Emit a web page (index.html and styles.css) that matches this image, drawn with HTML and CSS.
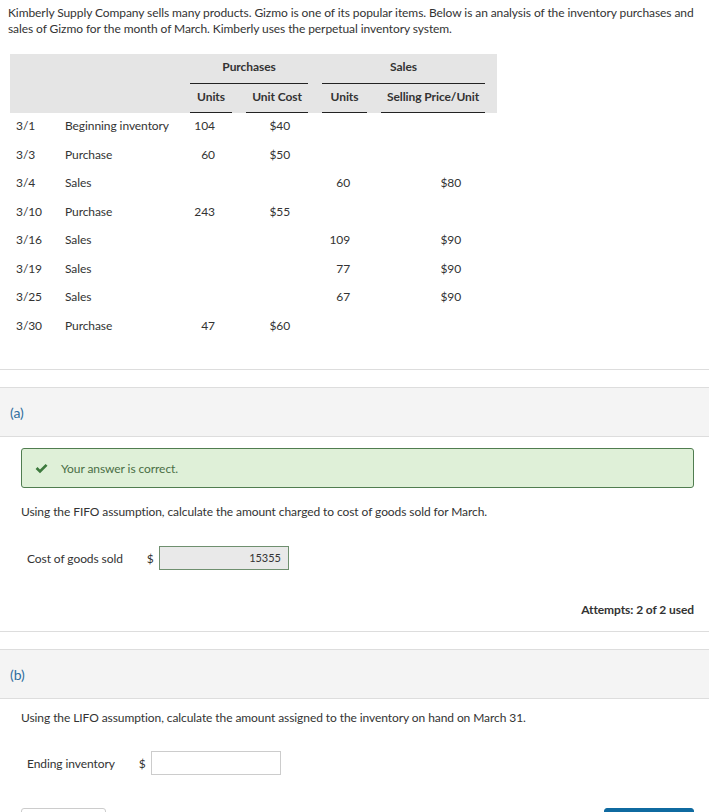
FILE: index.html
```html
<!DOCTYPE html>
<html lang="en">
<head>
<meta charset="utf-8">
<title>Gizmo inventory</title>
<link rel="stylesheet" href="styles.css">
</head>
<body>
<p class="intro">Kimberly Supply Company sells many products. Gizmo is one of its popular items. Below is an analysis of the inventory purchases and sales of Gizmo for the month of March. Kimberly uses the perpetual inventory system.</p>

<table class="inv">
  <colgroup>
    <col class="c-date"><col class="c-desc"><col class="c-pu"><col class="c-pc"><col class="c-su"><col class="c-sp">
  </colgroup>
  <thead>
    <tr class="h1">
      <th></th><th></th>
      <th colspan="2"><div class="u">Purchases</div></th>
      <th colspan="2" class="last"><div class="u">Sales</div></th>
    </tr>
    <tr class="h2">
      <th></th><th></th>
      <th><div class="u">Units</div></th>
      <th><div class="u">Unit Cost</div></th>
      <th><div class="u">Units</div></th>
      <th class="last"><div class="u">Selling Price/Unit</div></th>
    </tr>
  </thead>
  <tbody>
    <tr><td class="d">3/1</td><td class="t">Beginning inventory</td><td class="pu">104</td><td class="pc">$40</td><td class="su"></td><td class="sp"></td></tr>
    <tr><td class="d">3/3</td><td class="t">Purchase</td><td class="pu">60</td><td class="pc">$50</td><td class="su"></td><td class="sp"></td></tr>
    <tr><td class="d">3/4</td><td class="t">Sales</td><td class="pu"></td><td class="pc"></td><td class="su">60</td><td class="sp">$80</td></tr>
    <tr><td class="d">3/10</td><td class="t">Purchase</td><td class="pu">243</td><td class="pc">$55</td><td class="su"></td><td class="sp"></td></tr>
    <tr><td class="d">3/16</td><td class="t">Sales</td><td class="pu"></td><td class="pc"></td><td class="su">109</td><td class="sp">$90</td></tr>
    <tr><td class="d">3/19</td><td class="t">Sales</td><td class="pu"></td><td class="pc"></td><td class="su">77</td><td class="sp">$90</td></tr>
    <tr><td class="d">3/25</td><td class="t">Sales</td><td class="pu"></td><td class="pc"></td><td class="su">67</td><td class="sp">$90</td></tr>
    <tr><td class="d">3/30</td><td class="t">Purchase</td><td class="pu">47</td><td class="pc">$60</td><td class="su"></td><td class="sp"></td></tr>
  </tbody>
</table>

<div class="rule"></div>

<div class="part-head">(a)</div>
<div class="content">
  <div class="alert">
    <svg class="check" width="13" height="11" viewBox="0 0 13 11" aria-hidden="true">
      <path d="M0.6 5.9 L2.5 4 L5 6.5 L10.6 0.9 L12.5 2.8 L5 10.3 Z" fill="#3d7a3d"/>
    </svg>
    <span>Your answer is correct.</span>
  </div>
  <p class="q">Using the FIFO assumption, calculate the amount charged to cost of goods sold for March.</p>
  <div class="field">
    <span class="lbl">Cost of goods sold</span>
    <span class="cur">$</span>
    <div class="inp done">15355</div>
  </div>
  <p class="attempts">Attempts: 2 of 2 used</p>
</div>

<div class="rule rule2"></div>

<div class="part-head">(b)</div>
<div class="content">
  <p class="q q2">Using the LIFO assumption, calculate the amount assigned to the inventory on hand on March 31.</p>
  <div class="field field2">
    <span class="lbl">Ending inventory</span>
    <span class="cur">$</span>
    <div class="inp"></div>
  </div>
  <div class="actions">
    <button class="btn ghost" aria-label="Save for Later"></button>
    <button class="btn primary" aria-label="Submit Answer"></button>
  </div>
</div>
</body>
</html>
```

FILE: styles.css
```css
body {
  margin: 0;
  font-family: Lato, "Open Sans", "Liberation Sans", sans-serif;
  font-size: 12px;
  letter-spacing: -0.08px;
  color: #333;
  background: #fff;
}

p { margin: 0; }

.intro {
  margin: 5px 8px 0;
  line-height: 16px;
}

.inv {
  margin: 17px 0 0 10px;
  width: 487px;
  table-layout: fixed;
  border-collapse: separate;
  border-spacing: 0;
}

.c-date { width: 49px; }
.c-desc { width: 124px; }
.c-pu { width: 56px; }
.c-pc { width: 76px; }
.c-su { width: 59px; }
.c-sp { width: 123px; }

.inv th {
  background: #e5e5e5;
  padding: 0 7px;
  vertical-align: bottom;
  font-weight: 700;
  line-height: 16px;
}

.inv th.last { padding-right: 12px; }

.inv .u {
  text-align: center;
  border-bottom: 1px solid #222;
  padding-top: 5px;
}

.inv .h1 .u { padding-bottom: 8px; }
.inv .h2 .u { padding-bottom: 7px; }

.inv tbody tr { height: 28.5px; }

.inv td {
  padding: 0 0 2px;
  line-height: 16px;
  white-space: nowrap;
}

.inv td.d { padding-left: 6px; }
.inv td.t { padding-left: 6px; }
.inv td.pu { text-align: right; padding-right: 24px; }
.inv td.pc { text-align: right; padding-right: 25px; }
.inv td.su { text-align: right; padding-right: 24px; }
.inv td.sp { text-align: right; padding-right: 36px; }

.rule {
  margin-top: 28px;
  border-top: 1px solid #ddd;
}

.rule2 { margin-top: 13px; }

.part-head {
  margin-top: 17px;
  height: 48px;
  display: flex;
  align-items: center;
  padding-left: 10px;
  background: #f4f4f4;
  border-top: 1px solid #ddd;
  border-bottom: 1px solid #ddd;
  color: #2e6e9e;
  font-size: 14px;
}

.content {
  padding: 0 15px 0 21px;
}

.alert {
  margin-top: 11px;
  height: 40px;
  box-sizing: border-box;
  display: flex;
  align-items: center;
  gap: 13px;
  padding-left: 13px;
  background: #dff0d8;
  border: 1px solid #507d50;
  border-radius: 3px;
  color: #4a6e45;
}

.check { flex: none; }

.q {
  margin-top: 16px;
  line-height: 16px;
}

.q2 { margin-top: 11px; }

.field {
  margin-top: 26px;
  display: flex;
  align-items: center;
  padding-left: 6px;
}

.field2 { margin-top: 25px; }

.lbl { margin-right: 24px; }

.cur { margin-right: 5px; }

.inp {
  width: 130px;
  height: 24px;
  box-sizing: border-box;
  border: 1px solid #ccc;
  background: #fff;
  text-align: right;
  padding-right: 7px;
  line-height: 22px;
  font-size: 11px;
}

.inp.done {
  background: #e9e9e9;
  border-color: #6f8f6f;
}

.attempts {
  margin-top: 32px;
  text-align: right;
  font-weight: 700;
  line-height: 16px;
}

.actions {
  margin-top: 33px;
  display: flex;
  justify-content: space-between;
}

.btn {
  height: 36px;
  border-radius: 3px;
  padding: 0;
}

.btn.ghost {
  width: 85px;
  background: #fff;
  border: 1px solid #ccc;
}

.btn.primary {
  width: 90px;
  background: #0f6aa0;
  border: 1px solid #0f6aa0;
}
```
